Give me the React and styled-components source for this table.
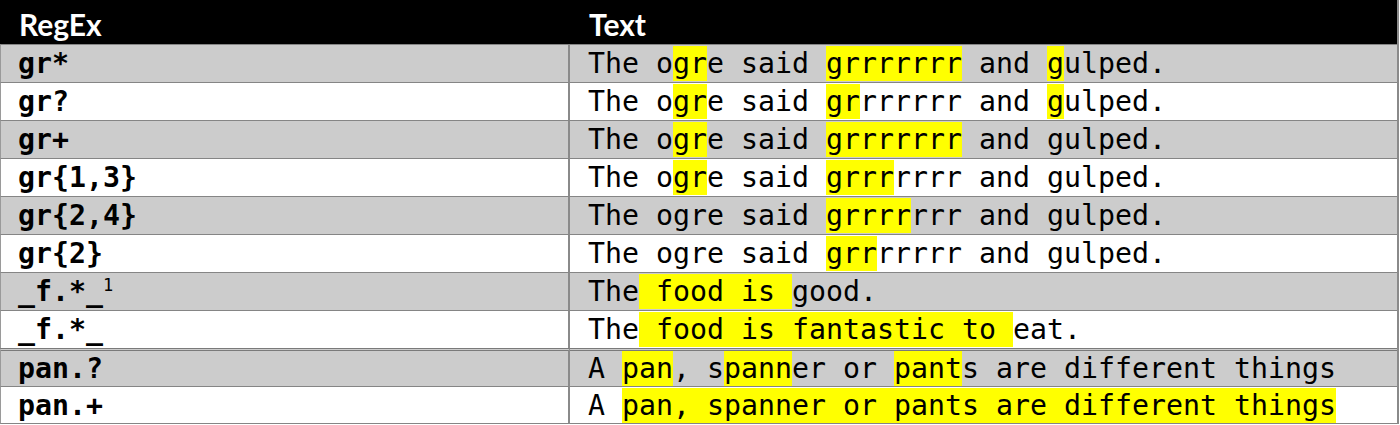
import React from "react";
import styled, { createGlobalStyle } from "styled-components";

const GlobalStyle = createGlobalStyle`
  body {
    margin: 0;
    background: #ffffff;
  }
`;

const Table = styled.div`
  display: grid;
  grid-template-columns: 570px 1fr;
  width: 1399px;
  border-right: 2px solid #8a8a8a;
  box-sizing: border-box;
`;

const HeadCell = styled.div`
  height: 44px;
  box-sizing: border-box;
  background: #000000;
  color: #ffffff;
  font-family: Lato, "Open Sans", sans-serif;
  font-weight: 700;
  font-size: 30px;
  line-height: 48px;
  padding-left: 19px;
  border-right: ${(props) => (props.$first ? "2px solid #000" : "none")};
`;

const Cell = styled.div`
  height: 38px;
  box-sizing: border-box;
  background: ${(props) => (props.$shaded ? "#cccccc" : "#ffffff")};
  border-top: ${(props) => (props.$split ? "3px double #7a7a7a" : "1px solid #858585")};
  border-bottom: ${(props) => (props.$last ? "1px solid #858585" : "none")};
  border-left: ${(props) => (props.$first ? "1px solid #9a9a9a" : "none")};
  border-right: ${(props) => (props.$first ? "2px solid #8a8a8a" : "none")};
  padding-left: 18px;
  font-family: "DejaVu Sans Mono", "Liberation Mono", monospace;
  font-size: 28.24px;
  line-height: ${(props) => (props.$split ? "35px" : "37px")};
  white-space: pre;
  color: #000000;
`;

const Pattern = styled(Cell)`
  font-weight: 700;
  padding-left: 17px;
`;

const Mark = styled.span`
  background: #ffff00;
  padding: 1px 0;
`;

const Note = styled.sup`
  font-family: "DejaVu Sans Mono", monospace;
  font-weight: 400;
  font-size: 17px;
  line-height: 0;
  vertical-align: 10px;
`;

// [start, end) character ranges to highlight
const rows = [
  { re: "gr*", text: "The ogre said grrrrrrr and gulped.", hl: [[5, 7], [14, 22], [27, 28]] },
  { re: "gr?", text: "The ogre said grrrrrrr and gulped.", hl: [[5, 7], [14, 16], [27, 28]] },
  { re: "gr+", text: "The ogre said grrrrrrr and gulped.", hl: [[5, 7], [14, 22]] },
  { re: "gr{1,3}", text: "The ogre said grrrrrrr and gulped.", hl: [[5, 7], [14, 18]] },
  { re: "gr{2,4}", text: "The ogre said grrrrrrr and gulped.", hl: [[14, 19]] },
  { re: "gr{2}", text: "The ogre said grrrrrrr and gulped.", hl: [[14, 17]] },
  { re: "_f.*_", note: "1", text: "The food is good.", hl: [[3, 12]] },
  { re: "_f.*_", text: "The food is fantastic to eat.", hl: [[3, 25]] },
  { re: "pan.?", text: "A pan, spanner or pants are different things", hl: [[2, 5], [8, 12], [18, 22]], split: true },
  { re: "pan.+", text: "A pan, spanner or pants are different things", hl: [[2, 44]] },
];

const Highlighted = ({ text, ranges }) => {
  const parts = [];
  let pos = 0;
  ranges.forEach(([a, b], i) => {
    if (a > pos) parts.push(<span key={`t${i}`}>{text.slice(pos, a)}</span>);
    parts.push(<Mark key={`m${i}`}>{text.slice(a, b)}</Mark>);
    pos = b;
  });
  if (pos < text.length) parts.push(<span key="rest">{text.slice(pos)}</span>);
  return <>{parts}</>;
};

export default function App() {
  return (
    <>
      <GlobalStyle />
      <Table>
        <HeadCell $first>RegEx</HeadCell>
        <HeadCell>Text</HeadCell>
        {rows.map((row, i) => (
          <React.Fragment key={i}>
            <Pattern $first $shaded={i % 2 === 0} $split={row.split} $last={i === rows.length - 1}>
              {row.re}
              {row.note && <Note>{row.note}</Note>}
            </Pattern>
            <Cell $shaded={i % 2 === 0} $split={row.split} $last={i === rows.length - 1}>
              <Highlighted text={row.text} ranges={row.hl} />
            </Cell>
          </React.Fragment>
        ))}
      </Table>
    </>
  );
}
